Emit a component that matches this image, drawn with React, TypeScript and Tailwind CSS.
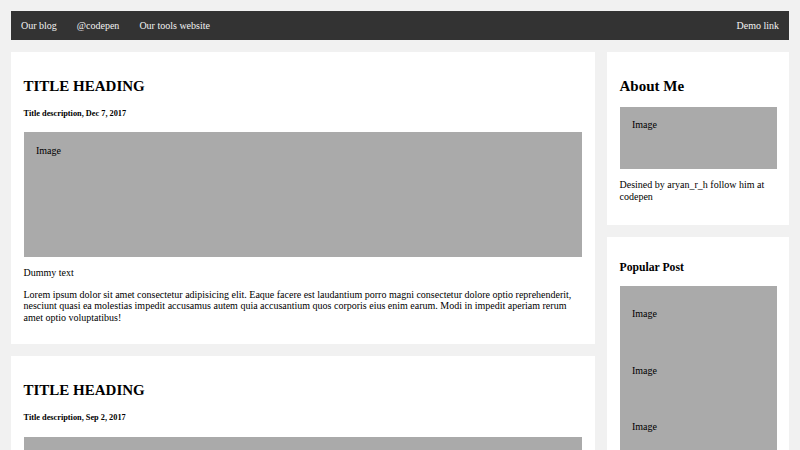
import React from "react";

const serif = { fontFamily: '"Liberation Serif", "Times New Roman", serif' };

function Post({ date }: { date: string }) {
  return (
    <div className="bg-white px-[12.5px] pt-[12.5px] pb-[12.5px] mt-[12.5px] first:mt-0">
      <h2 className="text-[15px] font-bold leading-[17.25px] mt-[13.4px] mb-[13.9px] text-black">TITLE HEADING</h2>
      <h5 className="text-[8.3px] font-bold leading-[9.5px] mt-0 mb-[13.9px] text-black">Title description, {date}</h5>
      <div className="bg-[#aaaaaa] h-[125px] p-[12.5px] text-[10px] leading-[11.5px]">Image</div>
      <p className="text-[10px] leading-[11.5px] mt-[10px] mb-[10px]">Dummy text</p>
      <p className="text-[10px] leading-[11.5px] mt-[10px] mb-[8px]">
        Lorem ipsum dolor sit amet consectetur adipisicing elit. Eaque facere est laudantium porro magni consectetur dolore optio reprehenderit, nesciunt quasi ea molestias impedit accusamus autem quia accusantium quos corporis eius enim earum. Modi in impedit aperiam rerum amet optio voluptatibus!
      </p>
    </div>
  );
}

export default function App() {
  return (
    <div className="min-h-screen bg-[#f1f1f1] px-[11px] pt-[11px] pb-[12px] text-black" style={serif}>
      <nav className="flex justify-between bg-[#333333]">
        <div className="flex">
          <a className="px-[10px] py-[8.75px] text-[10px] leading-[11.5px] text-[#f2f2f2]">Our blog</a>
          <a className="px-[10px] py-[8.75px] text-[10px] leading-[11.5px] text-[#f2f2f2]">@codepen</a>
          <a className="px-[10px] py-[8.75px] text-[10px] leading-[11.5px] text-[#f2f2f2]">Our tools website</a>
        </div>
        <a className="px-[10px] py-[8.75px] text-[10px] leading-[11.5px] text-[#f2f2f2]">Demo link</a>
      </nav>
      <div className="flex items-start mt-[12px]">
        <div className="w-3/4">
          <Post date="Dec 7, 2017" />
          <Post date="Sep 2, 2017" />
        </div>
        <div className="w-1/4 pl-[12.5px]">
          <div className="bg-white p-[12.5px]">
            <h2 className="text-[15px] font-bold leading-[17.25px] mt-[13px] mb-[12px]">About Me</h2>
            <div className="bg-[#aaaaaa] h-[62.5px] p-[12.5px] text-[10px] leading-[11.5px]">Image</div>
            <p className="text-[10px] leading-[11.5px] my-[10px]">Desined by aryan_r_h follow him at codepen</p>
          </div>
          <div className="bg-white p-[12.5px] mt-[12.5px]">
            <h3 className="text-[11.7px] font-bold leading-[13.5px] mt-[11.5px] mb-[10.8px]">Popular Post</h3>
            <div className="bg-[#aaaaaa] p-[12.5px]">
              <p className="text-[10px] leading-[11.5px] my-[10px]">Image</p>
            </div>
            <div className="bg-[#aaaaaa] p-[12.5px]">
              <p className="text-[10px] leading-[11.5px] my-[10px]">Image</p>
            </div>
            <div className="bg-[#aaaaaa] p-[12.5px]">
              <p className="text-[10px] leading-[11.5px] my-[10px]">Image</p>
            </div>
          </div>
        </div>
      </div>
    </div>
  );
}
